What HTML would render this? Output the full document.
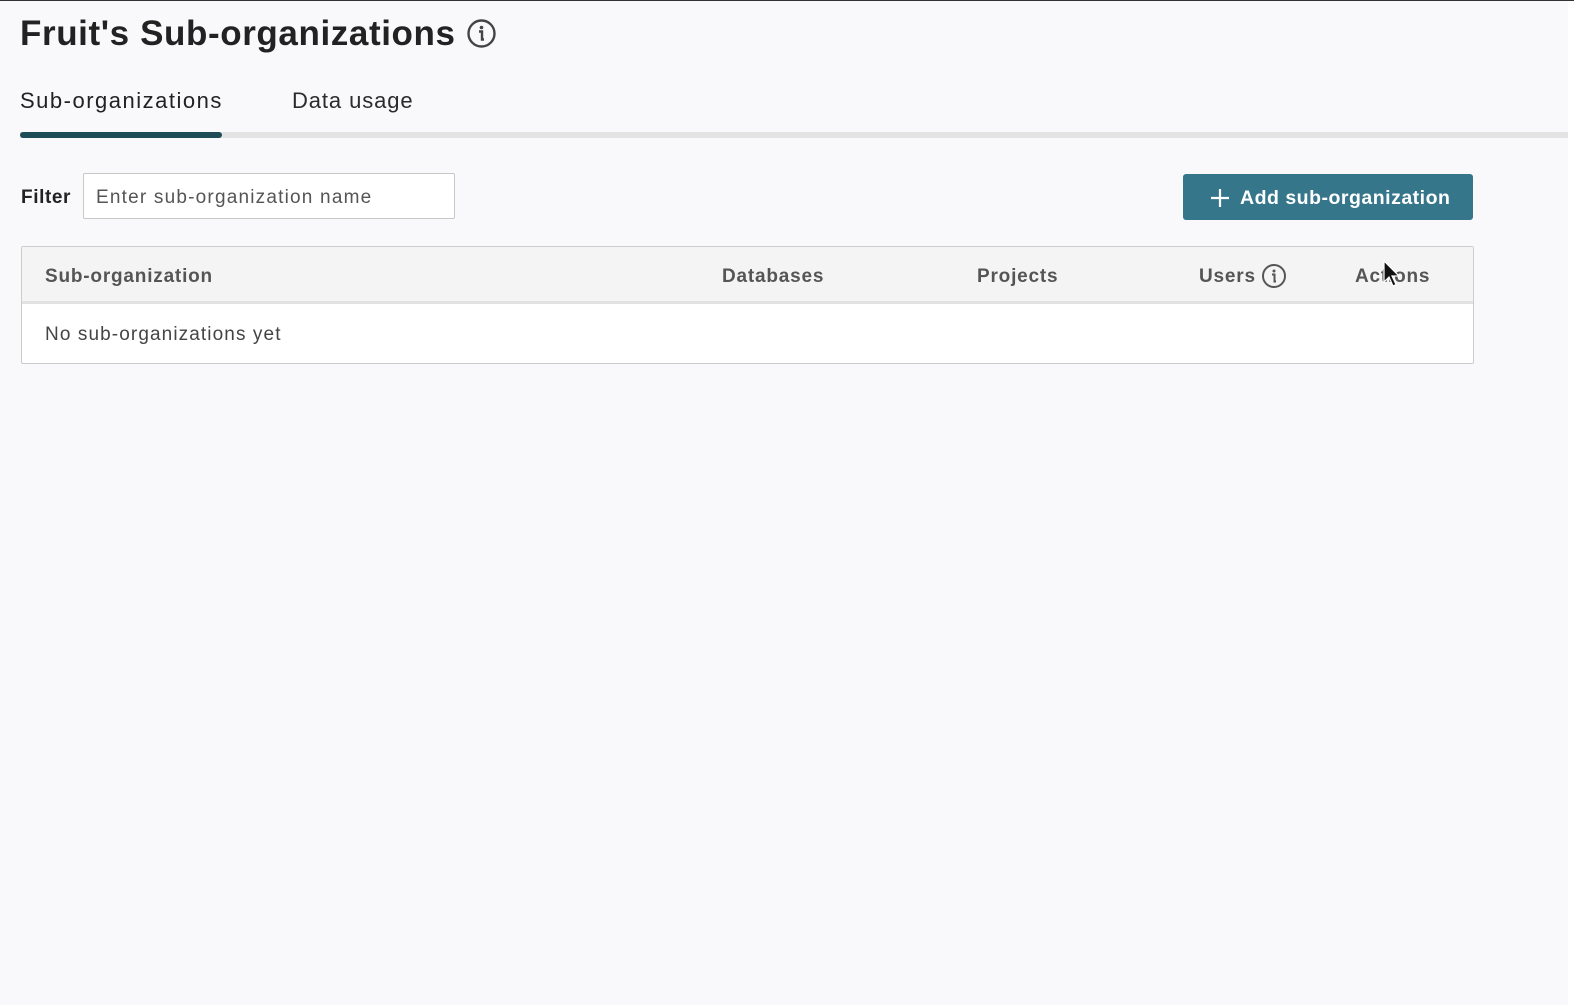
<!DOCTYPE html>
<html><head><meta charset="utf-8"><style>
*{box-sizing:border-box;margin:0;padding:0}
body{width:1574px;height:1005px;background:#f9f9fb;font-family:"Liberation Sans",sans-serif;position:relative;overflow:hidden;color:#2b2b2b}
.a{position:absolute;white-space:nowrap}
.h{font-size:19px;font-weight:bold;color:#555;letter-spacing:0.8px;top:266px}
</style></head><body>
<div class="a" style="left:0;top:0;width:1574px;height:1px;background:#333"></div>
<div class="a" style="left:1568px;top:1px;width:6px;height:1004px;background:#fff"></div>
<div class="a" style="left:20px;top:14px;font-size:35px;font-weight:bold;color:#222;letter-spacing:0.6px">Fruit's Sub-organizations</div>
<svg class="a" style="left:466px;top:18px" width="31" height="31" viewBox="0 0 31 31"><circle cx="15.5" cy="15.5" r="13" fill="none" stroke="#444" stroke-width="2.4"/><circle cx="15.5" cy="9.5" r="1.8" fill="#444"/><path d="M13 13.5h3v8h2" fill="none" stroke="#444" stroke-width="2.4"/></svg>
<div class="a" style="left:20px;top:88px;font-size:22px;color:#222;letter-spacing:1.5px">Sub-organizations</div>
<div class="a" style="left:292px;top:88px;font-size:22px;color:#2b2b2b;letter-spacing:0.9px">Data usage</div>
<div class="a" style="left:20px;top:132px;width:1548px;height:6px;background:#e3e3e3"></div>
<div class="a" style="left:20px;top:132px;width:202px;height:6px;background:#1d4b56;border-radius:3px"></div>
<div class="a" style="left:21px;top:187px;font-size:19px;font-weight:bold;color:#222;letter-spacing:0.6px">Filter</div>
<div class="a" style="left:83px;top:173px;width:372px;height:46px;background:#fff;border:1px solid #c8c8c8;border-radius:2px"></div>
<div class="a" style="left:96px;top:187px;font-size:19px;color:#555;letter-spacing:1.2px">Enter sub-organization name</div>
<div class="a" style="left:1183px;top:174px;width:290px;height:46px;background:#36768b;border-radius:3px"></div>
<svg class="a" style="left:1210px;top:188px" width="20" height="20"><path d="M10 1v18M1 10h18" stroke="#fff" stroke-width="2.2"/></svg>
<div class="a" style="left:1240px;top:187px;font-size:19.5px;font-weight:bold;color:#fff;letter-spacing:0.5px">Add sub-organization</div>
<div class="a" style="left:21px;top:246px;width:1453px;height:118px;background:#fff;border:1px solid #ccc;border-radius:2px"></div>
<div class="a" style="left:22px;top:247px;width:1451px;height:57px;background:#f4f4f4;border-bottom:3px solid #e2e2e2"></div>
<div class="a h" style="left:45px">Sub-organization</div>
<div class="a h" style="left:722px">Databases</div>
<div class="a h" style="left:977px">Projects</div>
<div class="a h" style="left:1199px">Users</div>
<svg class="a" style="left:1261px;top:263px" width="26" height="26" viewBox="0 0 26 26"><circle cx="13" cy="13" r="11" fill="none" stroke="#555" stroke-width="2"/><circle cx="13" cy="8" r="1.5" fill="#555"/><path d="M11 11.5h2.5v7h1.5" fill="none" stroke="#555" stroke-width="2"/></svg>
<div class="a h" style="left:1355px">Actions</div>
<svg class="a" style="left:1382px;top:259px" width="20" height="30"><path d="M2 2v21l5-5 4 9 3-1.5-4-8.5h7z" fill="#111" stroke="#fff" stroke-width="1.2"/></svg>
<div class="a" style="left:45px;top:324px;font-size:19px;color:#444;letter-spacing:1.1px">No sub-organizations yet</div>
</body></html>
